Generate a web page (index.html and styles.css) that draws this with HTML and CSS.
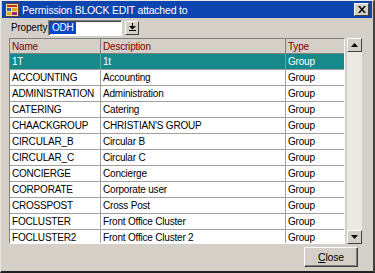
FILE: index.html
```html
<!DOCTYPE html>
<html>
<head>
<meta charset="utf-8">
<link rel="stylesheet" href="styles.css">
</head>
<body>
<div class="window">
  <div class="titlebar">
    <svg class="appicon" width="14" height="14" viewBox="0 0 14 14">
      <rect x="0.5" y="0.5" width="13" height="13" fill="#f0e0a0" stroke="#604020"/>
      <rect x="2" y="2" width="10" height="2" fill="#c03020"/>
      <rect x="2" y="5" width="4" height="3" fill="#3060c0"/>
      <rect x="7" y="5" width="5" height="3" fill="#e0a020"/>
      <rect x="2" y="9" width="4" height="3" fill="#e0a020"/>
      <rect x="7" y="9" width="5" height="3" fill="#a02080"/>
    </svg>
    <span class="title">Permission BLOCK EDIT attached to</span>
    <span class="xbtn">
      <svg width="8" height="7" viewBox="0 0 8 7"><path d="M0 0h2l2 2.5L6 0h2L5 3.5 8 7H6L4 4.5 2 7H0l3-3.5z" fill="#000"/></svg>
    </span>
  </div>
  <div class="content">
    <div class="proprow">
      <span class="proplabel">Property</span>
      <span class="propinput"><span class="sel">ODH</span></span>
      <span class="dropbtn">
        <svg width="9" height="9" viewBox="0 0 9 9"><path d="M4 0h1v3h3L4.5 6.5 1 3h3z" fill="#000"/><rect x="1" y="7" width="7" height="1" fill="#000"/></svg>
      </span>
    </div>
    <div class="gridwrap">
      <div class="grid">
        <div class="row head">
          <div class="c1">Name</div><div class="c2">Description</div><div class="c3">Type</div>
        </div>
        <div class="row selected"><div class="c1">1T</div><div class="c2">1t</div><div class="c3">Group</div></div>
        <div class="row"><div class="c1">ACCOUNTING</div><div class="c2">Accounting</div><div class="c3">Group</div></div>
        <div class="row"><div class="c1">ADMINISTRATION</div><div class="c2">Administration</div><div class="c3">Group</div></div>
        <div class="row"><div class="c1">CATERING</div><div class="c2">Catering</div><div class="c3">Group</div></div>
        <div class="row"><div class="c1">CHAACKGROUP</div><div class="c2">CHRISTIAN'S GROUP</div><div class="c3">Group</div></div>
        <div class="row"><div class="c1">CIRCULAR_B</div><div class="c2">Circular B</div><div class="c3">Group</div></div>
        <div class="row"><div class="c1">CIRCULAR_C</div><div class="c2">Circular C</div><div class="c3">Group</div></div>
        <div class="row"><div class="c1">CONCIERGE</div><div class="c2">Concierge</div><div class="c3">Group</div></div>
        <div class="row"><div class="c1">CORPORATE</div><div class="c2">Corporate user</div><div class="c3">Group</div></div>
        <div class="row"><div class="c1">CROSSPOST</div><div class="c2">Cross Post</div><div class="c3">Group</div></div>
        <div class="row"><div class="c1">FOCLUSTER</div><div class="c2">Front Office Cluster</div><div class="c3">Group</div></div>
        <div class="row"><div class="c1">FOCLUSTER2</div><div class="c2">Front Office Cluster 2</div><div class="c3">Group</div></div>
      </div>
      <div class="scrollbar">
        <span class="sbtn"><svg width="7" height="4" viewBox="0 0 7 4"><path d="M3.5 0L7 4H0z" fill="#000"/></svg></span>
        <span class="track"></span>
        <span class="sbtn"><svg width="7" height="4" viewBox="0 0 7 4"><path d="M0 0h7L3.5 4z" fill="#000"/></svg></span>
      </div>
    </div>
    <div class="footer">
      <span class="closebtn"><u>C</u>lose</span>
    </div>
  </div>
</div>
</body>
</html>
```

FILE: styles.css
```css
* { box-sizing: border-box; }
html, body { margin: 0; padding: 0; }
body {
  width: 375px;
  height: 273px;
  font-family: "Liberation Sans", Arial, sans-serif;
  font-size: 10px;
  letter-spacing: -0.2px;
  background: #d4d0c8;
  overflow: hidden;
}
.window {
  width: 375px;
  height: 273px;
  background: #d4d0c8;
  border-top: 1px solid #e8e6e0;
  border-left: 1px solid #e8e6e0;
  border-right: 2px solid #404040;
  border-bottom: 2px solid #202020;
  display: flex;
  flex-direction: column;
}
.titlebar {
  height: 17px;
  margin: 0 1px;
  background: #0c44b0;
  color: #fff;
  display: flex;
  align-items: center;
  padding: 0 2px 0 3px;
}
.appicon { flex: none; }
.title {
  margin-left: 3px;
  font-size: 10.5px;
  letter-spacing: -0.2px;
  flex: 1;
  white-space: nowrap;
}
.xbtn {
  width: 15px;
  height: 13px;
  background: #d4d0c8;
  border: 1px solid;
  border-color: #fff #404040 #404040 #fff;
  display: flex;
  align-items: center;
  justify-content: center;
  margin-right: 1px;
}
.content {
  flex: 1;
  display: flex;
  flex-direction: column;
  padding: 0 0 0 8px;
}
.proprow {
  display: flex;
  align-items: center;
  height: 17px;
  margin-top: 1px;
}
.proplabel {
  margin-left: 2px;
  width: 37px;
}
.propinput {
  width: 74px;
  height: 16px;
  background: #fff;
  border: 1px solid;
  border-color: #808080 #fff #fff #808080;
  box-shadow: inset 1px 1px 0 #404040;
  display: flex;
  align-items: center;
  padding-left: 1px;
}
.sel {
  background: #0a44c8;
  color: #fff;
  padding: 0 2px;
  line-height: 12px;
}
.dropbtn {
  margin-left: 3px;
  width: 14px;
  height: 14px;
  background: #d4d0c8;
  border: 1px solid;
  border-color: #fff #404040 #404040 #fff;
  display: flex;
  align-items: center;
  justify-content: center;
}
.gridwrap {
  display: flex;
  margin-top: 2px;
  height: 206px;
}
.grid {
  width: 336px;
  border: 1px solid;
  border-color: #808080 #fff #fff #808080;
  background: #fff;
  overflow: hidden;
}
.row {
  display: flex;
  height: 16px;
  border-bottom: 1px solid #a0a0a0;
  align-items: center;
  color: #000;
}
.row > div {
  height: 100%;
  display: flex;
  align-items: center;
  padding-left: 2px;
  border-right: 1px solid #a0a0a0;
  white-space: nowrap;
  overflow: hidden;
}
.c1 { width: 91px; }
.c2 { width: 185px; }
.c3 { width: 58px; border-right: none !important; }
.row.head {
  height: 15px;
  background: #d4d0c8;
  color: #800000;
  border-bottom: 1px solid #808080;
}
.row.head > div { border-right-color: #808080; }
.row.selected {
  background: #168a8a;
  color: #fff;
}
.row.selected > div { border-right-color: #5aa8a8; }
.scrollbar {
  width: 15px;
  margin-left: 2px;
  display: flex;
  flex-direction: column;
  background: #ebe9e4;
}
.sbtn {
  height: 14px;
  background: #d4d0c8;
  border: 1px solid;
  border-color: #fff #404040 #404040 #fff;
  display: flex;
  align-items: center;
  justify-content: center;
}
.track { flex: 1; }
.footer {
  display: flex;
  justify-content: flex-end;
  padding-right: 15px;
  margin-top: 3px;
}
.closebtn {
  width: 54px;
  height: 20px;
  border: 1px solid;
  border-color: #fff #404040 #404040 #fff;
  box-shadow: inset -1px -1px 0 #808080;
  display: flex;
  align-items: center;
  justify-content: center;
  font-size: 10.5px;
}
.closebtn u { text-decoration: underline; }
```
